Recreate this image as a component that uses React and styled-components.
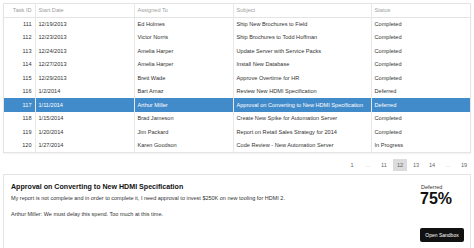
import React from "react";
import styled, { createGlobalStyle } from "styled-components";

const GlobalStyle = createGlobalStyle`
  html, body {
    margin: 0;
    padding: 0;
    background: #fff;
    font-family: "Liberation Sans", Arial, sans-serif;
    color: #333;
    overflow: hidden;
  }
`;

const Page = styled.div`
  padding: 3px 3px 0 3px;
  width: 474px;
  box-sizing: border-box;
`;

const GridPanel = styled.div`
  border: 1px solid #e4e4e4;
  box-shadow: 0 1px 2px rgba(0, 0, 0, 0.06);
`;

const Table = styled.table`
  width: 100%;
  border-collapse: collapse;
  table-layout: fixed;
  font-size: 5.6px;
`;

const Th = styled.th`
  height: 12.5px;
  padding: 0 ${({ right }) => (right ? "3px" : "2px")} 0 3px;
  text-align: ${({ right }) => (right ? "right" : "left")};
  font-weight: normal;
  color: #a0a0a0;
  border-bottom: 1px solid #e4e4e4;
  border-left: ${({ first }) => (first ? "none" : "1px solid #e8e8e8")};
  white-space: nowrap;
  overflow: hidden;
`;

const Tr = styled.tr`
  height: 13.5px;
  background: ${({ selected }) => (selected ? "#428bca" : "transparent")};
  color: ${({ selected }) => (selected ? "#fff" : "#333")};
`;

const Td = styled.td`
  padding: 0 ${({ right }) => (right ? "3px" : "2px")} 0 3px;
  text-align: ${({ right }) => (right ? "right" : "left")};
  border-left: ${({ first }) => (first ? "none" : "1px solid #e8e8e8")};
  white-space: nowrap;
  overflow: hidden;
`;

const Pager = styled.div`
  display: flex;
  justify-content: flex-end;
  gap: 2px;
  padding: 6px 0 3px 0;
  height: 12px;
`;

const PageItem = styled.div`
  width: 14px;
  height: 12px;
  display: flex;
  align-items: center;
  justify-content: center;
  font-size: 5.6px;
  color: ${({ muted }) => (muted ? "#bbb" : "#666")};
  background: ${({ active }) => (active ? "#dcdcdc" : "transparent")};
`;

const Detail = styled.div`
  display: flex;
  box-sizing: border-box;
  border: 1px solid #e4e4e4;
  border-bottom: none;
  height: 76px;
  padding: 7px 6px 0 7px;
`;

const DetailBody = styled.div`
  flex: 1;
`;

const Title = styled.div`
  font-size: 7.1px;
  font-weight: bold;
  line-height: 10px;
  color: #111;
`;

const Paragraph = styled.p`
  margin: ${({ first }) => (first ? "2px" : "8px")} 0 0 0;
  font-size: 5.5px;
  line-height: 8px;
  color: #333;
`;

const Side = styled.div`
  width: 44px;
  display: flex;
  flex-direction: column;
  align-items: flex-start;
  padding-top: 2px;
`;

const StatusLabel = styled.div`
  font-size: 5.5px;
  line-height: 7px;
  color: #333;
  padding-left: 1px;
`;

const Percent = styled.div`
  font-size: 16px;
  font-weight: bold;
  line-height: 16px;
  color: #111;
`;

const Button = styled.button`
  margin-top: 21px;
  width: 44px;
  height: 14px;
  padding: 0;
  border: none;
  border-radius: 2px;
  background: #111;
  color: #fff;
  font-family: "Liberation Sans", Arial, sans-serif;
  font-size: 5px;
`;

const rows = [
  [111, "12/19/2013", "Ed Holmes", "Ship New Brochures to Field", "Completed"],
  [112, "12/23/2013", "Victor Norris", "Ship Brochures to Todd Hoffman", "Completed"],
  [113, "12/24/2013", "Amelia Harper", "Update Server with Service Packs", "Completed"],
  [114, "12/27/2013", "Amelia Harper", "Install New Database", "Completed"],
  [115, "12/29/2013", "Brett Wade", "Approve Overtime for HR", "Completed"],
  [116, "1/2/2014", "Bart Arnaz", "Review New HDMI Specification", "Deferred"],
  [117, "1/11/2014", "Arthur Miller", "Approval on Converting to New HDMI Specification", "Deferred"],
  [118, "1/15/2014", "Brad Jameson", "Create New Spike for Automation Server", "Completed"],
  [119, "1/20/2014", "Jim Packard", "Report on Retail Sales Strategy for 2014", "Completed"],
  [120, "1/27/2014", "Karen Goodson", "Code Review - New Automation Server", "In Progress"],
];

const pages = [
  { label: "1" },
  { label: "...", muted: true },
  { label: "11" },
  { label: "12", active: true },
  { label: "13" },
  { label: "14" },
  { label: "...", muted: true },
  { label: "19" },
];

export default function App() {
  return (
    <Page>
      <GlobalStyle />
      <GridPanel>
        <Table>
          <colgroup>
            <col style={{ width: 31 }} />
            <col style={{ width: 99 }} />
            <col style={{ width: 99 }} />
            <col style={{ width: 138 }} />
            <col />
          </colgroup>
          <thead>
            <tr>
              <Th first right>Task ID</Th>
              <Th>Start Date</Th>
              <Th>Assigned To</Th>
              <Th>Subject</Th>
              <Th>Status</Th>
            </tr>
          </thead>
          <tbody>
            {rows.map(([id, date, who, subject, status]) => (
              <Tr key={id} selected={id === 117}>
                <Td first right>{id}</Td>
                <Td>{date}</Td>
                <Td>{who}</Td>
                <Td>{subject}</Td>
                <Td>{status}</Td>
              </Tr>
            ))}
          </tbody>
        </Table>
      </GridPanel>
      <Pager>
        {pages.map((p, i) => (
          <PageItem key={i} active={p.active} muted={p.muted}>
            {p.label}
          </PageItem>
        ))}
      </Pager>
      <Detail>
        <DetailBody>
          <Title>Approval on Converting to New HDMI Specification</Title>
          <Paragraph first>
            My report is not complete and in order to complete it, I need approval to invest $250K on new tooling for HDMI 2.
          </Paragraph>
          <Paragraph>Arthur Miller: We must delay this spend. Too much at this time.</Paragraph>
        </DetailBody>
        <Side>
          <StatusLabel>Deferred</StatusLabel>
          <Percent>75%</Percent>
          <Button>Open Sandbox</Button>
        </Side>
      </Detail>
    </Page>
  );
}
